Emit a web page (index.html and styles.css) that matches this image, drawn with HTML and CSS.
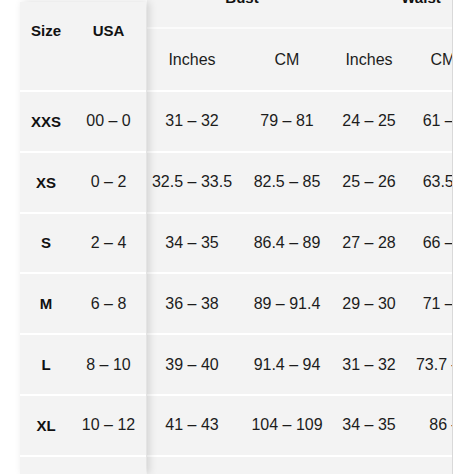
FILE: index.html
```html
<!DOCTYPE html>
<html>
<head>
<meta charset="utf-8">
<link rel="stylesheet" href="styles.css">
</head>
<body>
<div class="wrap">
  <div class="fixed">
    <div class="frow fhead"><div class="c1 b">Size</div><div class="c2 b">USA</div></div>
    <div class="frow"><div class="c1 b">XXS</div><div class="c2">00 – 0</div></div>
    <div class="frow"><div class="c1 b">XS</div><div class="c2">0 – 2</div></div>
    <div class="frow"><div class="c1 b">S</div><div class="c2">2 – 4</div></div>
    <div class="frow"><div class="c1 b">M</div><div class="c2">6 – 8</div></div>
    <div class="frow"><div class="c1 b">L</div><div class="c2">8 – 10</div></div>
    <div class="frow"><div class="c1 b">XL</div><div class="c2">10 – 12</div></div>
    <div class="frow"></div>
  </div>
  <div class="scroll">
    <div class="srow top"><div class="span b">Bust</div><div class="span b">Waist</div></div>
    <div class="srow sub"><div>Inches</div><div>CM</div><div>Inches</div><div class="cm2">CM</div></div>
    <div class="srow"><div>31 – 32</div><div>79 – 81</div><div>24 – 25</div><div>61 – 63.5</div></div>
    <div class="srow"><div>32.5 – 33.5</div><div>82.5 – 85</div><div>25 – 26</div><div>63.5 – 66</div></div>
    <div class="srow"><div>34 – 35</div><div>86.4 – 89</div><div>27 – 28</div><div>66 – 68.5</div></div>
    <div class="srow"><div>36 – 38</div><div>89 – 91.4</div><div>29 – 30</div><div>71 – 73.7</div></div>
    <div class="srow"><div>39 – 40</div><div>91.4 – 94</div><div>31 – 32</div><div>73.7 – 76.2</div></div>
    <div class="srow"><div>41 – 43</div><div>104 – 109</div><div>34 – 35</div><div>86 – 91</div></div>
    <div class="srow"></div>
  </div>
</div>
</body>
</html>
```

FILE: styles.css
```css
html, body {
  margin: 0;
  padding: 0;
  background: #fff;
}
body {
  font-family: "Liberation Sans", Arial, sans-serif;
  color: #1c1c1c;
  font-size: 16px;
}
.wrap {
  display: flex;
  height: 474px;
  overflow: hidden;
  padding-left: 20px;
}
.fixed {
  width: 126px;
  flex: none;
  margin-top: 2px;
  background: #f3f3f3;
  position: relative;
  z-index: 2;
  box-shadow: 3px 0 8px rgba(0, 0, 0, 0.15);
}
.frow {
  display: grid;
  grid-template-columns: 52px 74px;
  height: 58.8px;
  align-items: center;
  text-align: center;
  border-bottom: 2px solid #fff;
}
.frow.fhead {
  height: 88px;
  align-items: start;
}
.frow.fhead > div {
  padding-top: 20px;
}
.b {
  font-weight: bold;
  font-size: 15px;
  color: #111;
}
.c2 {
  padding-right: 1px;
}
.scroll {
  width: 305px;
  flex: none;
  margin-left: 1px;
  background: #f3f3f3;
  border-right: 1px solid #d9d9d9;
  overflow: hidden;
  white-space: nowrap;
}
.srow {
  display: grid;
  grid-template-columns: 90px 100px 64px 110px;
  height: 58.8px;
  align-items: center;
  text-align: center;
  border-bottom: 2px solid #fff;
  width: 364px;
}
.srow.top {
  height: 60px;
  margin-top: -33px;
  border-bottom-color: #fbfbfb;
}
.srow.sub {
  height: 61px;
}
.span {
  grid-column: span 2;
}
.srow.top .span:last-child {
  padding-right: 6px;
}
.cm2 {
  padding-right: 26px;
}
```
